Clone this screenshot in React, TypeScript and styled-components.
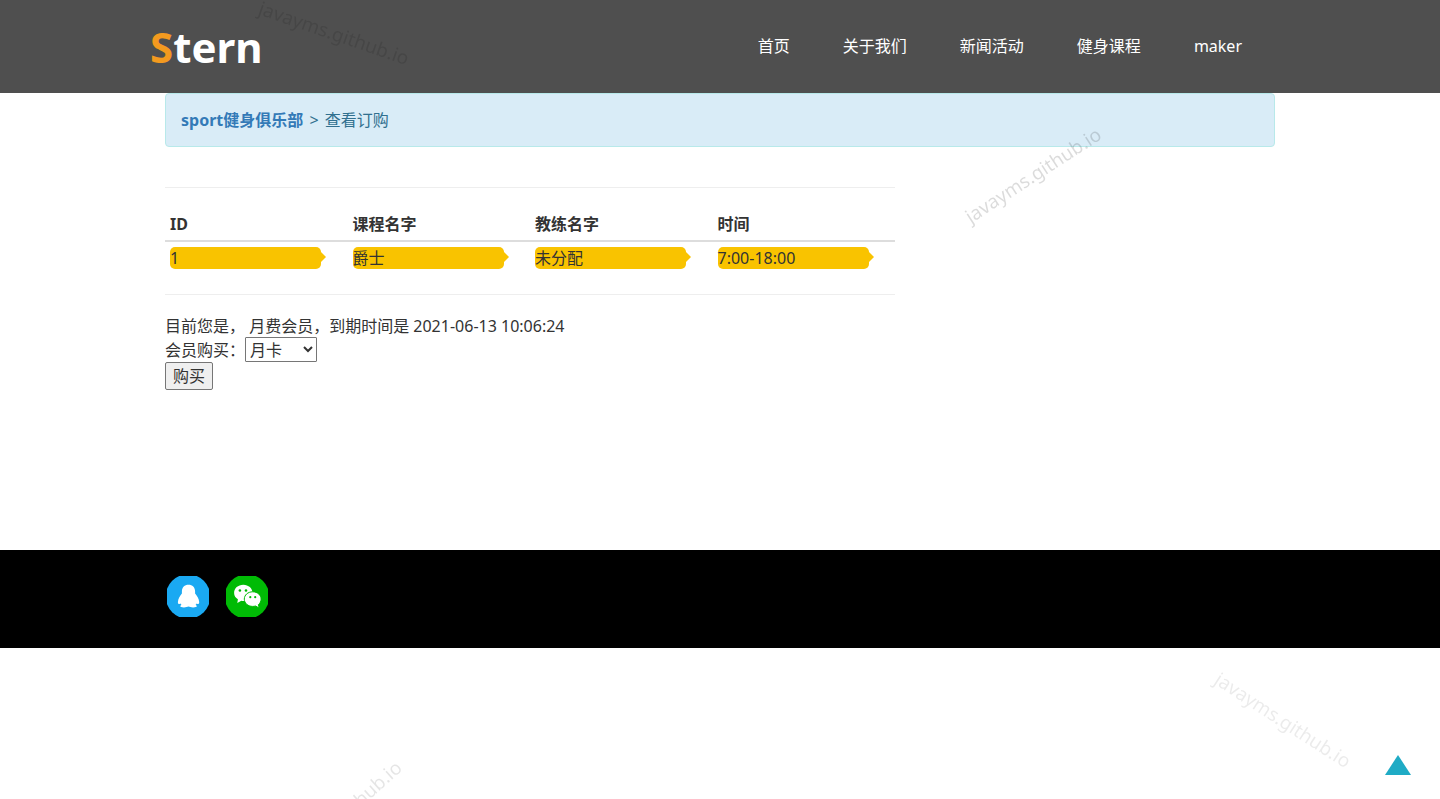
import React from "react";
import styled, { createGlobalStyle } from "styled-components";

const GlobalStyle = createGlobalStyle`
  *, *::before, *::after { box-sizing: border-box; }
  body {
    margin: 0;
    background: #fff;
    color: #333;
    font-family: "Noto Sans", "Noto Sans CJK SC", sans-serif;
    font-size: 16px;
    line-height: 24px;
  }
  a { text-decoration: none; }
`;

const Header = styled.header`
  background: #4f4f4f;
`;

const Container = styled.div`
  width: 100%;
  max-width: 1140px;
  margin: 0 auto;
`;

const Bar = styled(Container)`
  display: flex;
  align-items: center;
  justify-content: space-between;
  height: 93px;
  padding-right: 22px;
`;

const Logo = styled.a`
  color: #fff;
  font-size: 42px;
  line-height: 48px;
  font-weight: 700;
`;

const LogoInitial = styled.span`
  color: #f39a1f;
`;

const Nav = styled.nav`
  display: flex;
  gap: 1px;
  padding-bottom: 2px;
`;

const NavLink = styled.a`
  padding: 0 26px;
  color: #fff;
`;

const Content = styled(Container)`
  padding: 0 15px 160px;
`;

const Breadcrumb = styled.div`
  padding: 14px 15px;
  border: 1px solid #b8e9ea;
  border-radius: 4px;
  background: #d9ecf7;
  color: #31708f;
`;

const HomeLink = styled.a`
  color: #337ab7;
  font-weight: 700;
`;

const Separator = styled.span`
  margin: 0 2px;
`;

const Main = styled.main`
  width: 100%;
  max-width: 730px;
  padding-top: 40px;
`;

const Rule = styled.hr`
  height: 1px;
  margin: 0 0 20px;
  border: 0;
  background: #eee;
`;

const Table = styled.table`
  width: 100%;
  margin-bottom: 20px;
  table-layout: fixed;
  border-collapse: collapse;
`;

const HeadCell = styled.th`
  height: 33px;
  padding: 3px 5px 4px;
  border-bottom: 2px solid #ddd;
  text-align: left;
  font-weight: 700;
`;

const Cell = styled.td`
  padding: 5px;
`;

const Tag = styled.div`
  position: relative;
  width: 151px;
  height: 22px;
  border-radius: 5px;
  background: #f9c300;
  line-height: 22px;

  &::after {
    content: "";
    position: absolute;
    top: 3px;
    left: 100%;
    margin-left: -2px;
    border: 7px solid transparent;
    border-right-width: 0;
    border-left-color: #f9c300;
  }
`;

const Status = styled.p`
  margin: 0;
  line-height: 22px;
`;

const PlanRow = styled.div`
  display: flex;
  align-items: center;
`;

const PlanSelect = styled.select`
  width: 72px;
  height: 25px;
  padding: 0;
  border: 1px solid #767676;
  border-radius: 1px;
  background-color: #fff;
  color: #333;
  font: inherit;
  line-height: 22px;
`;

const BuyButton = styled.button`
  display: block;
  height: 28px;
  padding: 0 7px;
  border: 1px solid #767676;
  border-radius: 2px;
  background: #efefef;
  color: #333;
  font: inherit;
`;

const Footer = styled.footer`
  background: #000;
`;

const Social = styled(Container)`
  display: flex;
  gap: 17px;
  height: 98px;
  padding: 26px 17px;
`;

const SocialLink = styled.a`
  width: 42px;
  height: 41px;

  svg { display: block; }
`;

const TopButton = styled.button`
  position: fixed;
  right: 29px;
  bottom: 24px;
  padding: 0;
  border: 0;
  background: none;
  cursor: pointer;

  svg { display: block; }
`;

const Overlay = styled.div`
  position: fixed;
  inset: 0;
  overflow: hidden;
  pointer-events: none;
`;

const Watermark = styled.span<{ $x: number; $y: number; $angle: number; $alpha: number }>`
  position: absolute;
  left: ${(p) => p.$x}px;
  top: ${(p) => p.$y}px;
  width: 160px;
  margin: -14px 0 0 -80px;
  text-align: center;
  white-space: nowrap;
  font-size: 19px;
  line-height: 28px;
  color: rgba(0, 0, 0, ${(p) => p.$alpha});
  transform: rotate(${(p) => p.$angle}deg);
`;

const navItems = ["首页", "关于我们", "新闻活动", "健身课程", "maker"];
const columns = ["ID", "课程名字", "教练名字", "时间"];
const orders = [["1", "爵士", "未分配", "7:00-18:00"]];
const marks = [
  { x: 334, y: 33, angle: 19, alpha: 0.11 },
  { x: 1033, y: 175, angle: -33, alpha: 0.14 },
  { x: 1283, y: 720, angle: 33, alpha: 0.08 },
  { x: 340, y: 817, angle: -42, alpha: 0.1 },
];

function QQIcon() {
  return (
    <svg width="42" height="41" viewBox="0 0 42 41" aria-hidden="true">
      <circle cx="21" cy="20.5" r="22.3" fill="#1aa9f2" />
      <path
        fill="#fff"
        d="M21.500 8.700c-3.900 0-6.600 2.700-6.600 6.700v2.200c-1.700 2-3.800 5.300-4 8.400-.1 1.900.7 2.500 2.500 1.400.3.500.7 1 1.100 1.400-.8.400-1.200.9-1.200 1.500 0 .8 1.300 1.100 3.600 1.100 2 0 3.500-.3 4.600-.8 1.100.5 2.600.8 4.600.8 2.400 0 3.700-.3 3.700-1.100 0-.6-.4-1.100-1.200-1.500.4-.4.800-.9 1.100-1.400 1.800 1.100 2.600.5 2.500-1.400-.2-3.100-2.400-6.400-4.100-8.400v-2.200c0-4-2.700-6.700-6.600-6.700z"
      />
    </svg>
  );
}

function WechatIcon() {
  return (
    <svg width="42" height="41" viewBox="0 0 42 41" aria-hidden="true">
      <circle cx="21" cy="20.5" r="22.3" fill="#00bb05" />
      <path
        fill="#fff"
        d="M17.300 8.800C12 8.800 8.100 12.400 8.100 16.900c0 2.700 1.500 4.900 3.800 6.300l-.6 3.900 4-2.300c.7.100 1.300.2 2 .2 5.300 0 9.200-3.600 9.200-8.100s-3.900-8.100-9.200-8.100z"
      />
      <path
        fill="#fff"
        stroke="#00bb05"
        strokeWidth="1"
        d="M26.700 15.800c-4.800 0-8.400 3.200-8.400 7.300s3.600 7.300 8.400 7.300c1 0 1.900-.1 2.800-.4l3.700 2-.8-3.300c1.700-1.400 2.700-3.400 2.700-5.600 0-4.100-3.600-7.300-8.400-7.300z"
      />
      <g fill="#00bb05">
        <circle cx="13.900" cy="14.500" r="1.300" />
        <circle cx="20" cy="14.500" r="1.300" />
        <circle cx="24.300" cy="21.200" r="1.100" />
        <circle cx="29.200" cy="21.200" r="1.100" />
      </g>
    </svg>
  );
}

export default function App() {
  return (
    <>
      <GlobalStyle />
      <Header>
        <Bar>
          <Logo href="#"><LogoInitial>S</LogoInitial>tern</Logo>
          <Nav>
            {navItems.map((item) => (
              <NavLink key={item} href="#">{item}</NavLink>
            ))}
          </Nav>
        </Bar>
      </Header>
      <Content>
        <Breadcrumb>
          <HomeLink href="#">sport健身俱乐部</HomeLink> <Separator>&gt;</Separator> 查看订购
        </Breadcrumb>
        <Main>
          <Rule />
          <Table>
            <thead>
              <tr>
                {columns.map((name) => (
                  <HeadCell key={name} scope="col">{name}</HeadCell>
                ))}
              </tr>
            </thead>
            <tbody>
              {orders.map((order) => (
                <tr key={order[0]}>
                  {order.map((value) => (
                    <Cell key={value}><Tag>{value}</Tag></Cell>
                  ))}
                </tr>
              ))}
            </tbody>
          </Table>
          <Rule />
          <Status>目前您是， 月费会员，到期时间是 2021-06-13 10:06:24</Status>
          <PlanRow>
            <label htmlFor="plan">会员购买：</label>
            <PlanSelect id="plan" defaultValue="month">
              <option value="month">月卡</option>
              <option value="season">季卡</option>
              <option value="year">年卡</option>
            </PlanSelect>
          </PlanRow>
          <BuyButton type="button">购买</BuyButton>
        </Main>
      </Content>
      <Footer>
        <Social>
          <SocialLink href="#" aria-label="QQ"><QQIcon /></SocialLink>
          <SocialLink href="#" aria-label="微信"><WechatIcon /></SocialLink>
        </Social>
      </Footer>
      <Overlay aria-hidden="true">
        {marks.map((m) => (
          <Watermark key={m.x} $x={m.x} $y={m.y} $angle={m.angle} $alpha={m.alpha}>
            javayms.github.io
          </Watermark>
        ))}
      </Overlay>
      <TopButton type="button" aria-label="返回顶部">
        <svg width="26" height="20" viewBox="0 0 26 20" aria-hidden="true">
          <path d="M13 0L26 20H0z" fill="#1fabc5" />
        </svg>
      </TopButton>
    </>
  );
}
